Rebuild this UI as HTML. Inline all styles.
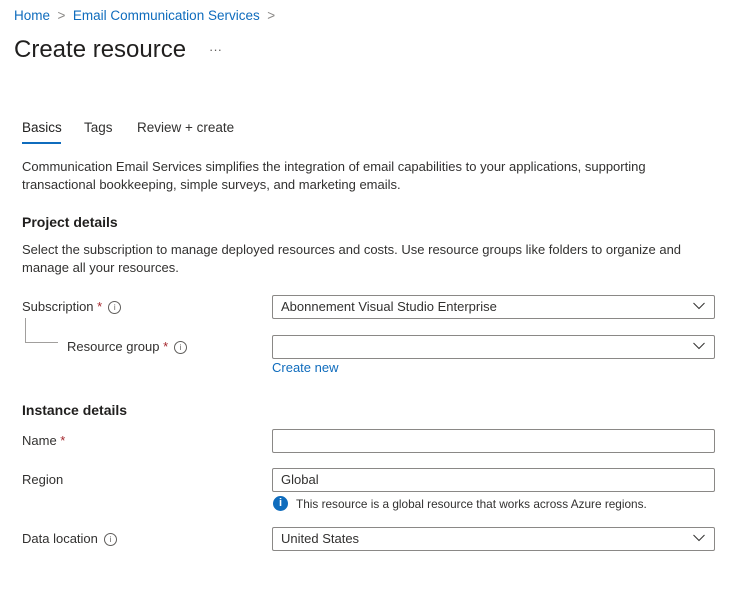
<!DOCTYPE html><html><head><style>
body{margin:0;width:750px;height:601px;background:#fff;font-family:"Liberation Sans",sans-serif;color:#323130;position:relative;overflow:hidden}
.a{position:absolute;white-space:nowrap;font-size:13px;line-height:16px}
.l{color:#0f6cbd}
.in{position:absolute;left:272px;height:22px;border:1px solid #8a8886;border-radius:2px;font-size:13px;line-height:22px;padding-left:8px;box-sizing:content-box;width:433px}
.ch{position:absolute;right:9px;top:6px}
.st{color:#a4262c}
.i{display:inline-block;width:11px;height:11px;border:1px solid #605e5c;border-radius:50%;font-size:8px;line-height:11px;text-align:center;vertical-align:1px;margin-left:6px;color:#605e5c}
</style></head><body>
<div class="a" style="left:14px;top:8px;font-size:13.5px"><span class="l">Home</span><span style="color:#8a8886">&nbsp;&nbsp;&gt;&nbsp;&nbsp;</span><span class="l">Email Communication Services</span><span style="color:#8a8886">&nbsp;&nbsp;&gt;</span></div>
<div class="a" style="left:14px;top:36px;font-size:24px;line-height:28px;color:#201f1e">Create resource</div>
<div class="a" style="left:209px;top:42px;color:#605e5c">···</div>
<div class="a" style="left:22px;top:120px;font-size:13.5px;color:#201f1e">Basics</div>
<div style="position:absolute;left:22px;top:142px;width:39px;height:2px;background:#0f6cbd"></div>
<div class="a" style="left:84px;top:120px;font-size:13.5px">Tags</div>
<div class="a" style="left:137px;top:120px;font-size:13.5px">Review + create</div>
<div class="a" style="left:22px;top:159px">Communication Email Services simplifies the integration of email capabilities to your applications, supporting</div>
<div class="a" style="left:22px;top:177px">transactional bookkeeping, simple surveys, and marketing emails.</div>
<div class="a" style="left:22px;top:214px;font-size:14px;font-weight:bold;color:#201f1e">Project details</div>
<div class="a" style="left:22px;top:242px">Select the subscription to manage deployed resources and costs. Use resource groups like folders to organize and</div>
<div class="a" style="left:22px;top:260px">manage all your resources.</div>
<div class="a" style="left:22px;top:299px">Subscription <span class="st">*</span><span class="i">i</span></div>
<div style="position:absolute;left:25px;top:318px;width:32px;height:24px;border-left:1px solid #a19f9d;border-bottom:1px solid #a19f9d"></div>
<div class="a" style="left:67px;top:339px">Resource group <span class="st">*</span><span class="i">i</span></div>
<div class="in" style="top:295px">Abonnement Visual Studio Enterprise<svg class="ch" width="12" height="8"><path d="M0.5 1L6 6.5 11.5 1" fill="none" stroke="#323130"/></svg></div>
<div class="in" style="top:335px"><svg class="ch" width="12" height="8"><path d="M0.5 1L6 6.5 11.5 1" fill="none" stroke="#323130"/></svg></div>
<div class="a l" style="left:272px;top:360px">Create new</div>
<div class="a" style="left:22px;top:402px;font-size:14px;font-weight:bold;color:#201f1e">Instance details</div>
<div class="a" style="left:22px;top:433px">Name <span class="st">*</span></div>
<div class="in" style="top:429px"></div>
<div class="a" style="left:22px;top:472px">Region</div>
<div class="in" style="top:468px">Global</div>
<div style="position:absolute;left:273px;top:496px;width:15px;height:15px;border-radius:50%;background:#0f6cbd;color:#fff;font-size:11px;font-weight:bold;line-height:15px;text-align:center">i</div>
<div class="a" style="left:296px;top:496px;font-size:11.8px">This resource is a global resource that works across Azure regions.</div>
<div class="a" style="left:22px;top:531px">Data location<span class="i">i</span></div>
<div class="in" style="top:527px">United States<svg class="ch" width="12" height="8"><path d="M0.5 1L6 6.5 11.5 1" fill="none" stroke="#323130"/></svg></div>
</body></html>
